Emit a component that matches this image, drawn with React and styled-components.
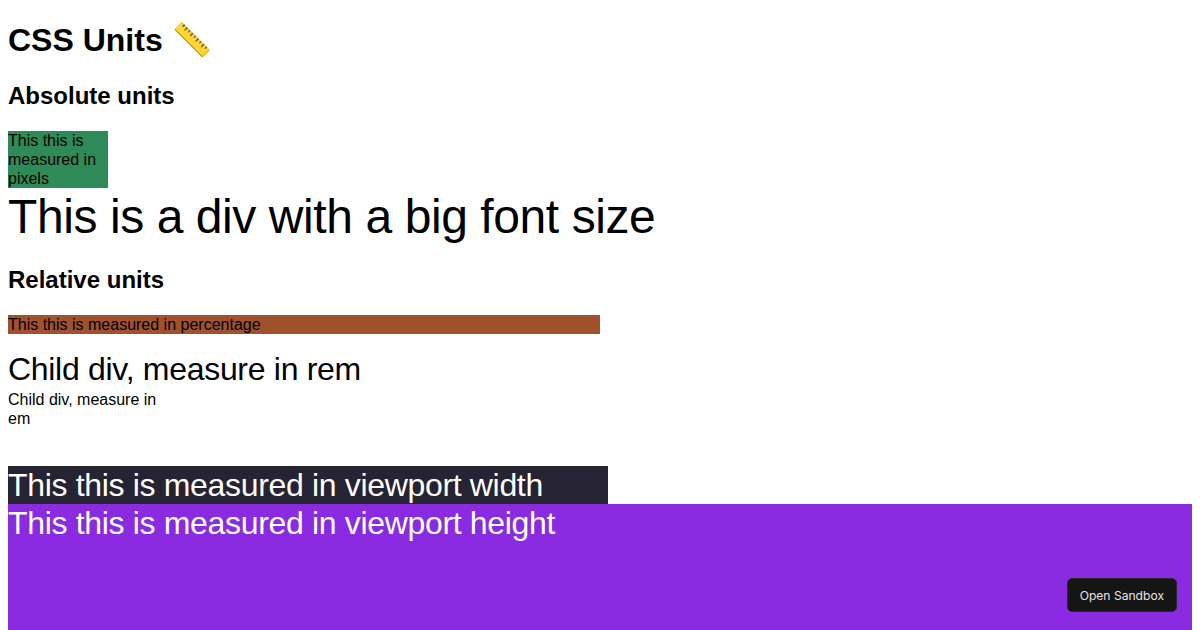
import React from "react";
import styled, { createGlobalStyle } from "styled-components";

const Global = createGlobalStyle`
  body {
    margin: 8px;
    font-family: "Liberation Sans", Arial, sans-serif;
    line-height: 1.19;
    color: #000;
    background: #fff;
  }
`;

const Title = styled.h1`
  font-size: 32px;
  line-height: 38px;
  margin: 13.44px 0 21.44px;
`;

// the emoji must not stretch the heading's line box
const Emoji = styled.span`
  line-height: 0;
`;

const Section = styled.h2`
  font-size: 24px;
  line-height: 30px;
  margin: 19.92px 0;
`;

const PixelBox = styled.div`
  width: 100px;
  background: #2e8b57;
`;

const BigText = styled.div`
  font-size: 48px;
  line-height: 57px;
  letter-spacing: -0.42px;
`;

const PercentBox = styled.div`
  width: 50%;
  background: #a0522d;
`;

const RemParent = styled.div`
  margin: 16px 0;
  height: 100px;
`;

const RemChild = styled.div`
  font-size: 2rem;
  line-height: 38px;
  letter-spacing: -0.3px;
`;

const EmChild = styled.div`
  font-size: 1em;
  width: 150px;
  margin-top: 2px;
`;

const ViewportBox = styled.div`
  width: ${(p) => p.$w || "auto"};
  height: ${(p) => p.$h || "auto"};
  background: ${(p) => p.$bg};
  color: #fff;
  font-size: 32px;
  line-height: 38px;
  letter-spacing: -0.33px;
`;

const SandboxButton = styled.button`
  position: fixed;
  right: 23px;
  bottom: 18px;
  height: 34px;
  padding: 0 12px;
  background: #151515;
  color: #e6e6e6;
  border: 1px solid #2a2a2a;
  border-radius: 5px;
  font-family: Inter, "Liberation Sans", sans-serif;
  font-size: 12.1px;
  cursor: pointer;
`;

export default function App() {
  return (
    <>
      <Global />
      <Title>
        CSS Units <Emoji>📏</Emoji>
      </Title>
      <Section>Absolute units</Section>
      <PixelBox>This this is measured in pixels</PixelBox>
      <BigText>This is a div with a big font size</BigText>
      <Section>Relative units</Section>
      <PercentBox>This this is measured in percentage</PercentBox>
      <RemParent>
        <RemChild>Child div, measure in rem</RemChild>
        <EmChild>Child div, measure in em</EmChild>
      </RemParent>
      <ViewportBox $w="50vw" $bg="#262433">
        This this is measured in viewport width
      </ViewportBox>
      <ViewportBox $h="50vh" $bg="#8a2be2">
        This this is measured in viewport height
      </ViewportBox>
      <SandboxButton>Open Sandbox</SandboxButton>
    </>
  );
}
